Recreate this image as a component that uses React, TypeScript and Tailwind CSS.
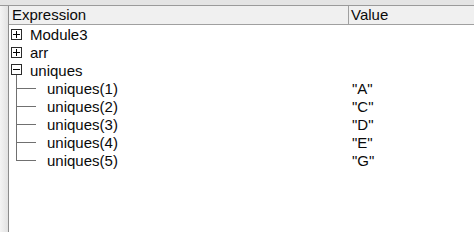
const rows = [
  { label: "Module3", state: "closed" },
  { label: "arr", state: "closed" },
  { label: "uniques", state: "open" },
];

const children = [
  { label: "uniques(1)", value: '"A"' },
  { label: "uniques(2)", value: '"C"' },
  { label: "uniques(3)", value: '"D"' },
  { label: "uniques(4)", value: '"E"' },
  { label: "uniques(5)", value: '"G"' },
];

const ToggleBox = ({ open }: { open: boolean }) => (
  <svg width="11" height="11" viewBox="0 0 11 11" className="shrink-0">
    <rect x="0.5" y="0.5" width="10" height="10" fill="white" stroke="#2a2a2a" />
    <line x1="2" y1="5.5" x2="9" y2="5.5" stroke="#000" />
    {!open && <line x1="5.5" y1="2" x2="5.5" y2="9" stroke="#000" />}
  </svg>
);

export default function App() {
  return (
    <div
      className="w-[474px] h-[232px] bg-white flex flex-col overflow-hidden text-[15px] text-[#0a0a0a]"
      style={{ fontFamily: '"Liberation Sans", Arial, sans-serif' }}
    >
      <div className="h-[6px] bg-[#e4e4e4] border-b border-[#9a9a9a]" />
      <div className="flex flex-1">
        <div className="w-[9px] bg-gradient-to-r from-[#f4f4f4] to-[#e2e2e2] border-r border-[#8c8c8c]" />
        <div className="flex-1 flex flex-col">
          {/* header */}
          <div className="flex h-[19px] bg-[#f0f0f0] border-b border-[#a0a0a0] items-center">
            <div className="w-[340px] h-full flex items-center pl-[3px] border-r border-[#a0a0a0]">
              Expression
            </div>
            <div className="flex-1 pl-[2px]">Value</div>
          </div>

          {/* top level rows */}
          {rows.map((r) => (
            <div key={r.label} className="flex h-[18px]">
              <div className="w-[341px] flex items-stretch">
                <div className="ml-[2px] w-[11px] flex flex-col items-center">
                  {r.state === "open" ? (
                    <>
                      <div className="h-[3px]" />
                      <ToggleBox open />
                      <div className="w-px flex-1 bg-[#707070]" />
                    </>
                  ) : (
                    <div className="flex-1 flex items-center">
                      <ToggleBox open={false} />
                    </div>
                  )}
                </div>
                <span className="ml-[8px] flex items-center leading-none">{r.label}</span>
              </div>
              <div className="flex-1" />
            </div>
          ))}

          {/* children */}
          {children.map((c, i) => {
            const last = i === children.length - 1;
            return (
              <div key={c.label} className="flex h-[18px]">
                <div className="w-[341px] flex items-stretch">
                  <div className="ml-[7px] w-[20px] flex flex-col">
                    <div className="h-[9px] border-l border-[#707070]" />
                    <div
                      className={
                        last
                          ? "flex-1 border-t border-[#707070]"
                          : "flex-1 border-l border-t border-[#707070]"
                      }
                    />
                  </div>
                  <span className="ml-[11px] flex items-center leading-none">{c.label}</span>
                </div>
                <div className="flex-1 flex items-center pl-[2px] leading-none">{c.value}</div>
              </div>
            );
          })}
        </div>
      </div>
    </div>
  );
}
